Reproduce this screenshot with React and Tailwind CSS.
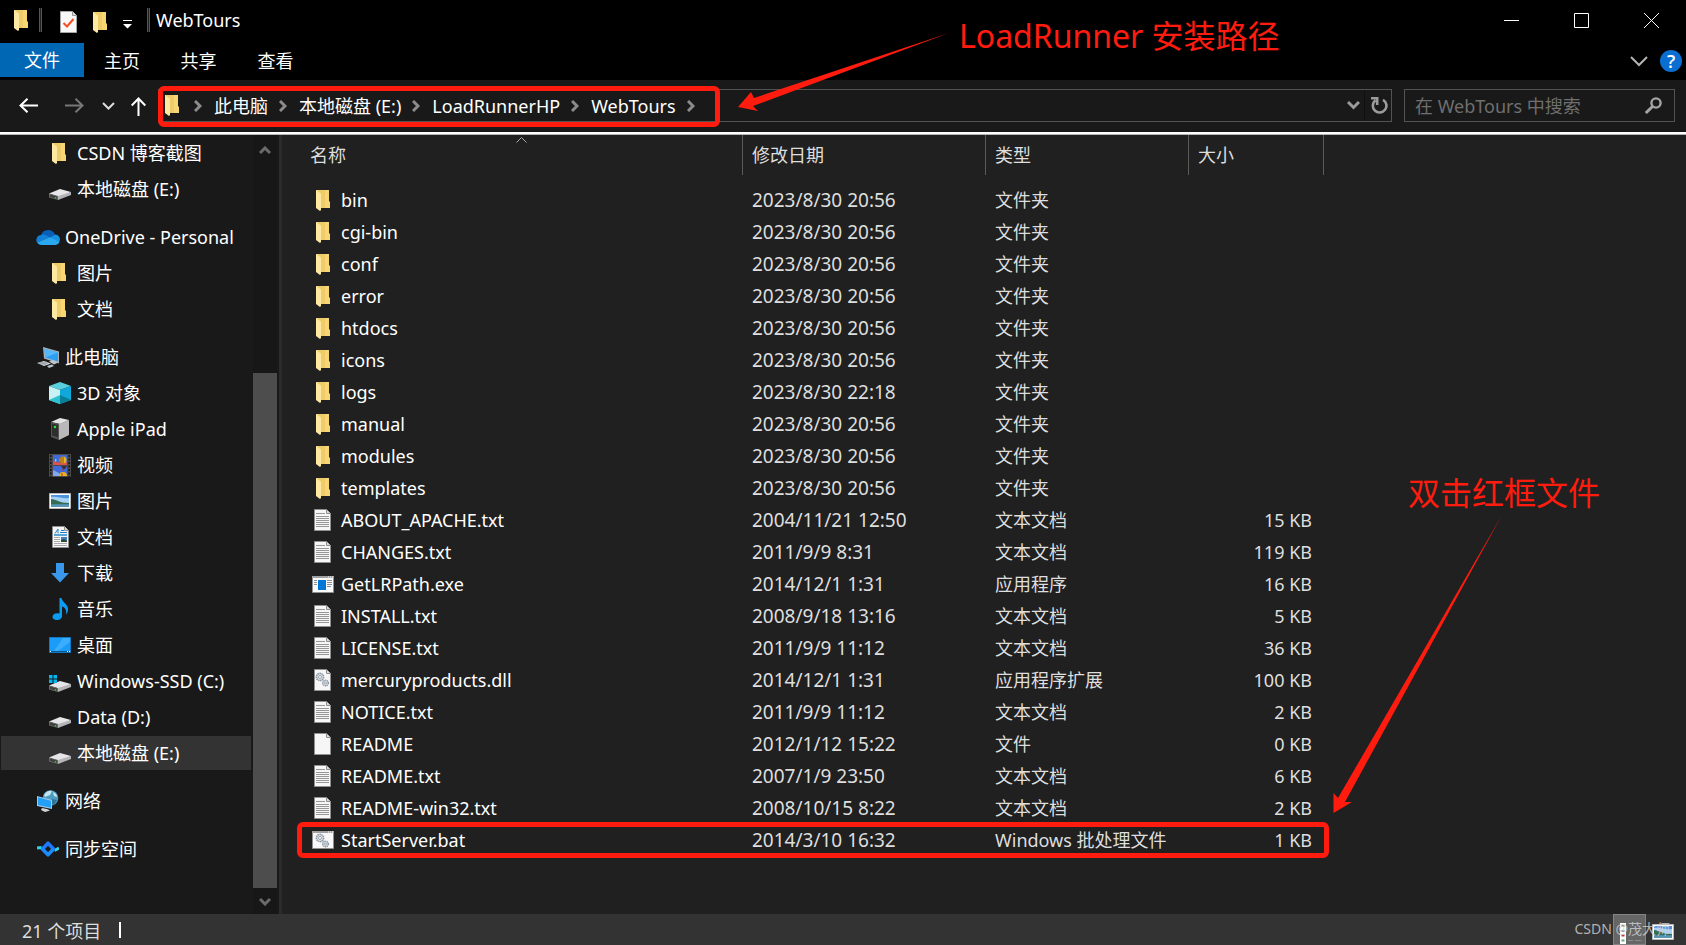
import { clsx } from 'clsx';

const FolderIcon = ({ className = '' }) => (
  <svg viewBox="0 0 14 21" className={clsx('h-[21px] w-[14px] shrink-0', className)} aria-hidden="true">
    <path d="M0 0h13v11l1 1v6H0z" fill="#f8d673" />
    <path d="M5 3 0 0h9v18H5z" fill="#efcb6a" />
    <path d="M0 0l5 4v17l-1-1v1L0 18z" fill="#ffe9a2" />
  </svg>
);

const Page = ({ children }) => (
  <svg viewBox="0 0 17 22" className="h-[22px] w-[17px] shrink-0" aria-hidden="true">
    <path d="M.5.5h12l4 4v17H.5z" fill="#f6f6f6" stroke="#8f8f8f" />
    <path d="M12.500.5v4h4" fill="#d9d9d9" stroke="#8f8f8f" />
    {children}
  </svg>
);

const Gears = ({ x = 0, y = 0 }) => (
  <g transform={`translate(${x} ${y})`} fill="#dfe4e8">
    <circle cx="6" cy="8" r="3.600" stroke="#8793a0" strokeWidth="1.600" strokeDasharray="1.400 .6" />
    <circle cx="6" cy="8" r="1.500" stroke="#8793a0" strokeWidth=".8" fill="#fff" />
    <circle cx="11.500" cy="14" r="2.800" stroke="#8793a0" strokeWidth="1.400" strokeDasharray="1.200 .6" />
    <circle cx="11.500" cy="14" r="1" stroke="#8793a0" strokeWidth=".8" fill="#fff" />
  </g>
);

const TextIcon = () => (
  <Page>
    <path d="M2 4.500h9M2 7.500h13M2 9.500h13M2 11.500h13M2 13.500h13M2 15.500h13M2 17.500h13" stroke="#8c8c8c" strokeWidth=".9" />
  </Page>
);

const DllIcon = () => (
  <Page>
    <Gears />
  </Page>
);

const ExeIcon = () => (
  <svg viewBox="0 0 22 17" className="h-[17px] w-[22px] shrink-0" aria-hidden="true">
    <path d="M.5.5h21v16H.5z" fill="#fafafa" stroke="#8f8f8f" />
    <path d="M0 0h22v2H0z" fill="#a0a0a0" />
    <path d="M6 4h8v10H6z" fill="#0078d7" />
    <path d="M2 4.500h3M2 6.500h3M2 8.500h3M15 4.500h5M15 6.500h5M15 8.500h5M15 10.500h4" stroke="#8f8f8f" />
    <path d="M16 1h1M18 1h1M20 1h1" stroke="#fff" />
  </svg>
);

const BatIcon = () => (
  <svg viewBox="0 0 22 18" className="h-[18px] w-[22px] shrink-0" aria-hidden="true">
    <path d="M.5.5h21v17H.5z" fill="#f8f8f8" stroke="#8f8f8f" />
    <path d="M0 0h22v2H0z" fill="#a0a0a0" />
    <path d="M16 1h1M18 1h1M20 1h1" stroke="#fff" />
    <Gears x={2} y={-1} />
  </svg>
);

const DriveIcon = ({ windows }) => (
  <svg viewBox="0 0 22 18" className="h-[18px] w-[22px] shrink-0 translate-y-0.5" aria-hidden="true">
    <path d="M0 11.500 11 7l11 3-11 5z" fill="#e6e6ea" />
    <path d="M0 11.500v4l9 2.500v-4z" fill="#6c6c6c" />
    <path d="M1 12.500v2.600l7 1.900v-2.600z" fill="#3d423d" />
    <path d="M9 14v4l13-5v-3z" fill="#b5b5b8" />
    <path d="M6.500 15v1.500" stroke="#1fd12b" strokeWidth="1.300" />
    {windows && <path d="M0 1h3.500v3.500H0zM4.500 1H8v3.500H4.500zM0 5.500h3.500V9H0zM4.500 5.500H8V9H4.500z" fill="#00b7f1" />}
  </svg>
);

const OneDriveIcon = () => (
  <svg viewBox="0 0 24 16" className="h-4 w-6 shrink-0" aria-hidden="true">
    <path d="M5 6a7.500 7.500 0 0 1 14-.5L14 9z" fill="#0a5fb8" />
    <path d="M5 6a5 5 0 0 0-4 7.500L14 8.500 9.500 6A7 7 0 0 0 5 6z" fill="#1180d8" />
    <path d="M14 8.500 19 5.500a5 5 0 0 1 4.500 7L21 14z" fill="#1592e2" />
    <path d="M1 13.500A5 5 0 0 0 5 16h14.500a4.500 4.500 0 0 0 4-3L14 8.200z" fill="#29a8ef" />
  </svg>
);

const ComputerIcon = () => (
  <svg viewBox="0 0 24 21" className="h-[21px] w-6 shrink-0" aria-hidden="true">
    <path d="M7 0l16 4.500v12L8 11.500z" fill="#a7b1ba" />
    <path d="M8.500 1.800 22 5.600v9L9.300 10.400z" fill="#2d9ff2" />
    <path d="M8.500 1.800 22 5.600 9.300 10.400z" fill="#55b8fa" />
    <path d="M1 16l7-2 7 2.500-7 2.500z" fill="#d6dade" />
    <path d="M3 16.500l8-1.500M5 17.500l7-1.500M4 15.300l6 2.200" stroke="#7e868d" strokeWidth=".6" />
    <path d="M13 14.500l4-1.500 5 2.500-4 2zM11 19l5-1.500 2 1.500-5 2z" fill="#bfc5ca" />
  </svg>
);

const CubeIcon = () => (
  <svg viewBox="0 0 22 22" className="size-[22px] shrink-0" aria-hidden="true">
    <path d="M11 0l11 4-11 4L0 4z" fill="#59cfdc" />
    <path d="M0 4l11 4v14L0 18z" fill="#c7f1f2" />
    <path d="M22 4 11 8v14l11-4z" fill="#0fa8d9" />
    <path d="M0 18l11-5v9z" fill="#2bc3d2" />
    <path d="M22 18l-11-5v9z" fill="#087f97" />
  </svg>
);

const DeviceIcon = () => (
  <svg viewBox="0 0 18 22" className="mx-0.5 h-[22px] w-[18px] shrink-0" aria-hidden="true">
    <path d="M0 4l9-4 9 2-9 4z" fill="#e4e4e4" />
    <path d="M0 4l8 2v16l-8-3z" fill="#555" />
    <path d="M1 5.500l6 1.500v12.500l-6-2z" fill="#2e2e2e" />
    <path d="M8 6l10-4v15L8 22z" fill="#b9b9b9" />
    <circle cx="4" cy="9" r="1.300" fill="#25e335" />
  </svg>
);

const VideoIcon = () => (
  <svg viewBox="0 0 22 23" className="h-[23px] w-[22px] shrink-0" aria-hidden="true">
    <path d="M0 0h22v23H0z" fill="#4b4b4b" />
    <path d="M4 1h14v10H4zM4 12h14v10H4z" fill="#4169d8" />
    <path d="M1.800 1v22M20.200 1v22" stroke="#181818" strokeWidth="1.600" strokeDasharray="2 1.500" />
    <path d="M4 7l4 1 4 1 6-1v3H4z" fill="#d8524f" />
    <circle cx="14" cy="6" r="3.500" fill="#edb21b" />
    <path d="M14 2.500v7M12 3v6" stroke="#84501a" />
    <path d="M6 5l2 1-2 2z" fill="#7be3ee" />
    <path d="M12 12h6l-2 3h-2z" fill="#442d31" />
    <path d="M4 16l6 3 1 3H4z" fill="#80a9f0" />
    <path d="M10 22a4 4 0 0 1 8 0z" fill="#edb21b" />
    <path d="M14 15v2M13 19v3" stroke="#b03630" />
  </svg>
);

const PictureIcon = () => (
  <svg viewBox="0 0 22 16" className="h-4 w-[22px] shrink-0" aria-hidden="true">
    <path d="M.5.5h21v15H.5z" fill="#fff" stroke="#b9b9b9" />
    <path d="M2 2h18v12H2z" fill="#4b94dd" />
    <path d="M2 4c6-1 12 2 18 1v5H2z" fill="#a8d2f4" />
    <path d="M2 6c5 0 8 4 18 4v1.500H2z" fill="#366d52" />
    <path d="M2 11.500h18V14H2z" fill="#5a95b4" />
  </svg>
);

const DocumentIcon = () => (
  <span className="flex w-[22px] shrink-0 justify-center">
    <Page>
      <path d="M3 7.500 6 3v4.500M9 4.500h3M8 6.500h7" stroke="#1b83cc" fill="none" />
      <path d="M2 9h13" stroke="#1b83cc" strokeWidth="1.400" />
      <path d="M2 11.500h6M2 13.500h6M2 15.500h6M2 17.500h13M2 19.500h13" stroke="#aaa" />
      <path d="M9 11h6v5H9z" fill="#3f7fc0" />
      <path d="M9 14l3-1 3 2v1H9z" fill="#2b4a3a" />
    </Page>
  </span>
);

const DownloadIcon = () => (
  <svg viewBox="0 0 22 20" className="h-5 w-[22px] shrink-0" aria-hidden="true">
    <path d="M7 0h8v10h5l-9 9.500L2 10h5z" fill="#3a98ec" />
  </svg>
);

const MusicIcon = () => (
  <svg viewBox="0 0 22 22" className="size-[22px] shrink-0" aria-hidden="true">
    <path d="M10.500 0h2c.5 4 6.500 6 6.500 11 0 3-1 4.500-2 5.500.8-4-.5-7-4-8V18c0 2.500-2.500 4-5 4s-4.500-1-4.500-3c0-2.500 3-4.500 7-3.500z" fill="#0b9bf3" />
  </svg>
);

const DesktopIcon = () => (
  <svg viewBox="0 0 22 16" className="h-4 w-[22px] shrink-0" aria-hidden="true">
    <path d="M.5.5h21v15H.5z" fill="#1a9cf8" stroke="#1479c2" />
    <path d="M14 1h7v4L9 14H5z" fill="#3badfc" />
    <path d="M1 14.500h20" stroke="#0b568f" />
    <path d="M1 14.500h1M18 14.500h1M20 14.500h1" stroke="#fff" />
  </svg>
);

const NetworkIcon = () => (
  <svg viewBox="0 0 22 22" className="mx-px size-[22px] shrink-0" aria-hidden="true">
    <circle cx="13.500" cy="8" r="7.800" fill="#4d9cc0" />
    <path d="M7 5c2-4 6-5 8-4l-2 4-5 2zM16 2c3 1 4 3 4 5l-3-1z" fill="#c3e5ef" />
    <path d="M15 9l5 1-3 5-3-1z" fill="#2c7298" />
    <path d="M0 6l15 4v9L0 16z" fill="#9fcdf0" />
    <path d="M1 7.200 14 10.800v7L1 15z" fill="#23a0f5" />
    <path d="M5 18l5 1 3 1.500-5 1.500-4-2z" fill="#d1d5d8" />
  </svg>
);

const SyncIcon = () => (
  <svg viewBox="0 0 22 18" className="mx-px h-[18px] w-[22px] shrink-0" aria-hidden="true" fill="none" strokeWidth="3.600">
    <path d="M17.500 10.500 22 8M4.500 7.500 0 8" stroke="#2fd3e3" strokeWidth="3" />
    <path d="M5.500 9 11 3.200 17.500 10" stroke="#1d78fb" strokeLinejoin="round" />
    <path d="M16.500 9 11 14.800 4.500 8" stroke="#1c8cfd" strokeLinejoin="round" />
  </svg>
);

const Chevron = ({ d = 'M1 1l6 6 6-6', w = 14, h = 9, stroke = 2, className }) => (
  <svg width={w} height={h} viewBox={`0 0 ${w} ${h}`} className={clsx('shrink-0', className)} fill="none" stroke="currentColor" strokeWidth={stroke} aria-hidden="true">
    <path d={d} />
  </svg>
);

const groups = [
  [
    { name: 'CSDN 博客截图', icon: 'folder' },
    { name: '本地磁盘 (E:)', icon: 'drive' },
  ],
  [
    { name: 'OneDrive - Personal', icon: 'onedrive', root: true },
    { name: '图片', icon: 'folder' },
    { name: '文档', icon: 'folder' },
  ],
  [
    { name: '此电脑', icon: 'computer', root: true },
    { name: '3D 对象', icon: 'cube' },
    { name: 'Apple iPad', icon: 'device' },
    { name: '视频', icon: 'video' },
    { name: '图片', icon: 'picture' },
    { name: '文档', icon: 'document' },
    { name: '下载', icon: 'download' },
    { name: '音乐', icon: 'music' },
    { name: '桌面', icon: 'desktop' },
    { name: 'Windows-SSD (C:)', icon: 'system' },
    { name: 'Data (D:)', icon: 'drive' },
    { name: '本地磁盘 (E:)', icon: 'drive', active: true },
  ],
  [{ name: '网络', icon: 'network', root: true }],
  [{ name: '同步空间', icon: 'sync', root: true }],
];

const sideIcons = {
  folder: <FolderIcon className="mr-[5px] ml-[3px]" />,
  drive: <DriveIcon />,
  system: <DriveIcon windows />,
  onedrive: <OneDriveIcon />,
  computer: <ComputerIcon />,
  cube: <CubeIcon />,
  device: <DeviceIcon />,
  video: <VideoIcon />,
  picture: <PictureIcon />,
  document: <DocumentIcon />,
  download: <DownloadIcon />,
  music: <MusicIcon />,
  desktop: <DesktopIcon />,
  network: <NetworkIcon />,
  sync: <SyncIcon />,
};

const fileIcons = {
  文件夹: <FolderIcon />,
  文本文档: <TextIcon />,
  应用程序: <ExeIcon />,
  应用程序扩展: <DllIcon />,
  文件: <Page />,
  'Windows 批处理文件': <BatIcon />,
};

const files = [
  ['bin', '2023/8/30 20:56', '文件夹', ''],
  ['cgi-bin', '2023/8/30 20:56', '文件夹', ''],
  ['conf', '2023/8/30 20:56', '文件夹', ''],
  ['error', '2023/8/30 20:56', '文件夹', ''],
  ['htdocs', '2023/8/30 20:56', '文件夹', ''],
  ['icons', '2023/8/30 20:56', '文件夹', ''],
  ['logs', '2023/8/30 22:18', '文件夹', ''],
  ['manual', '2023/8/30 20:56', '文件夹', ''],
  ['modules', '2023/8/30 20:56', '文件夹', ''],
  ['templates', '2023/8/30 20:56', '文件夹', ''],
  ['ABOUT_APACHE.txt', '2004/11/21 12:50', '文本文档', '15 KB'],
  ['CHANGES.txt', '2011/9/9 8:31', '文本文档', '119 KB'],
  ['GetLRPath.exe', '2014/12/1 1:31', '应用程序', '16 KB'],
  ['INSTALL.txt', '2008/9/18 13:16', '文本文档', '5 KB'],
  ['LICENSE.txt', '2011/9/9 11:12', '文本文档', '36 KB'],
  ['mercuryproducts.dll', '2014/12/1 1:31', '应用程序扩展', '100 KB'],
  ['NOTICE.txt', '2011/9/9 11:12', '文本文档', '2 KB'],
  ['README', '2012/1/12 15:22', '文件', '0 KB'],
  ['README.txt', '2007/1/9 23:50', '文本文档', '6 KB'],
  ['README-win32.txt', '2008/10/15 8:22', '文本文档', '2 KB'],
  ['StartServer.bat', '2014/3/10 16:32', 'Windows 批处理文件', '1 KB'],
];

const crumbs = ['此电脑', '本地磁盘 (E:)', 'LoadRunnerHP', 'WebTours'];

function TitleBar() {
  return (
    <header className="flex h-[43px] items-start justify-between bg-black">
      <div className="flex h-10 items-center pl-3.5">
        <FolderIcon />
        <span className="ml-[11px] h-6 w-[3px] border-x border-[#555] bg-[#222]" />
        <button aria-label="属性" className="ml-[18px] mt-1">
          <svg viewBox="0 0 17 22" className="h-[22px] w-[17px]" aria-hidden="true">
            <path d="M.5.5h12l4 4v17H.5z" fill="#f8f8f8" stroke="#a5a5a5" />
            <path d="M12.500.5v4h4" fill="#ddd" stroke="#999" />
            <path d="M3.500 12l3.500 3.500L13.500 8" fill="none" stroke="#f25022" strokeWidth="2" />
          </svg>
        </button>
        <button aria-label="新建文件夹" className="ml-4 mt-1">
          <FolderIcon />
        </button>
        <button aria-label="自定义快速访问工具栏" className="ml-4 mt-2">
          <svg viewBox="0 0 9 9" className="size-[9px]" aria-hidden="true">
            <path d="M0 0h9v1H0zM0 4h9L4.500 8.500z" fill="#fff" />
          </svg>
        </button>
        <span className="ml-[15px] h-6 w-[3px] border-x border-[#555] bg-[#222]" />
        <h1 className="ml-1.5 text-lg">WebTours</h1>
      </div>
      <div className="flex h-[41px] items-center">
        <button aria-label="最小化" className="flex w-[70px] justify-center">
          <svg viewBox="0 0 15 15" className="size-[15px]" stroke="#fff" aria-hidden="true"><path d="M0 7.500h15" /></svg>
        </button>
        <button aria-label="最大化" className="flex w-[70px] justify-center">
          <svg viewBox="0 0 15 15" className="size-[15px]" fill="none" stroke="#fff" aria-hidden="true"><path d="M.5.5h14v14H.5z" /></svg>
        </button>
        <button aria-label="关闭" className="flex w-[70px] justify-center">
          <svg viewBox="0 0 15 15" className="size-[15px]" stroke="#fff" aria-hidden="true"><path d="M0 0l15 15M15 0 0 15" /></svg>
        </button>
      </div>
    </header>
  );
}

function Ribbon() {
  return (
    <div className="flex h-[37px] items-start bg-black text-lg leading-9">
      <button className="w-[84px] bg-[#0067b5] text-center leading-[34px]">文件</button>
      <button className="w-[76px] text-center">主页</button>
      <button className="w-[77px] text-center">共享</button>
      <button className="w-[77px] text-center">查看</button>
      <div className="ml-auto flex h-9 items-center gap-3 pr-1 text-[#b4b4b4]">
        <button aria-label="展开功能区">
          <Chevron d="M1 1l8 8 8-8" w={18} h={11} />
        </button>
        <button aria-label="帮助" className="flex size-[22px] items-center justify-center rounded-full bg-[#0a6fd1] font-['Open_Sans',sans-serif] text-lg leading-none font-semibold text-white">
          ?
        </button>
      </div>
    </div>
  );
}

function AddressBar() {
  return (
    <div className="flex h-[52px] items-center bg-[#191919] pr-[11px] pb-px pl-[19px] text-lg">
      <button aria-label="后退">
        <svg viewBox="0 0 19 15" className="h-[15px] w-[19px]" fill="none" stroke="#fff" strokeWidth="2" aria-hidden="true"><path d="M19 7.500H1.500M8.500.7 1.500 7.500l7 6.800" /></svg>
      </button>
      <button aria-label="前进" className="ml-[27px]">
        <svg viewBox="0 0 19 15" className="h-[15px] w-[19px]" fill="none" stroke="#777" strokeWidth="2" aria-hidden="true"><path d="M0 7.500h17.500M10.500.7l7 6.800-7 6.800" /></svg>
      </button>
      <button aria-label="最近浏览的位置" className="ml-[18px] text-[#ddd]">
        <Chevron d="M1 1l5.500 5.500L12 1" w={13} h={8} />
      </button>
      <button aria-label="上移" className="ml-4">
        <svg viewBox="0 0 15 19" className="mt-0.5 h-[19px] w-[15px]" fill="none" stroke="#fff" strokeWidth="2" aria-hidden="true"><path d="M7.500 19V1.500M.7 8.500l6.800-7 6.800 7" /></svg>
      </button>
      <div className="relative ml-3 flex h-[33px] flex-1 items-center border border-[#535353]">
        <nav className="flex items-center pl-1.5" aria-label="地址">
          <FolderIcon />
          <Chevron d="M1 1l5 5-5 5" w={8} h={12} stroke={3} className="mr-3 ml-[15px] text-[#8c8c8c]" />
          {crumbs.map((crumb) => (
            <span key={crumb} className="flex items-center">
              <a href="#">{crumb}</a>
              <Chevron d="M1 1l5 5-5 5" w={8} h={12} stroke={3} className="mr-3 ml-[11px] text-[#8c8c8c]" />
            </span>
          ))}
        </nav>
        <span className="absolute -top-1 -left-px h-[41px] w-[562px] rounded-md border-[5px] border-[#ff1c0f]" />
        <button aria-label="历史记录" className="mr-1 ml-auto text-[#9b9b9b]">
          <Chevron d="M1 1l5.500 5.500L12 1" w={13} h={9} stroke={3} />
        </button>
        <button aria-label="刷新" className="flex h-full items-center border-l border-[#111] pr-[3px] pl-1.5">
          <svg viewBox="0 0 17 18" className="h-[18px] w-[17px]" fill="none" stroke="#9b9b9b" strokeWidth="2.600" aria-hidden="true">
            <path d="M12 2.800a6.800 6.800 0 1 1-7.500.5M0 1.300h6.200V8" />
          </svg>
        </button>
      </div>
      <label className="ml-3 flex h-[33px] w-[271px] items-center border border-[#535353] pr-3 pl-2.5">
        <input type="search" placeholder="在 WebTours 中搜索" aria-label="在 WebTours 中搜索" className="min-w-0 flex-1 bg-transparent outline-none placeholder:text-[#6f6f6f]" />
        <svg viewBox="0 0 17 17" className="size-[17px]" fill="none" stroke="#a5a5a5" aria-hidden="true">
          <circle cx="11" cy="6" r="4.600" strokeWidth="2.400" />
          <path d="M7.500 9.500.8 16" strokeWidth="3" />
        </svg>
      </label>
    </div>
  );
}

function Sidebar() {
  return (
    <aside className="flex w-[282px] shrink-0 border-r-[3px] border-[#2b2b2b] bg-[#191919]">
      <nav className="flex min-w-0 flex-1 flex-col gap-3" aria-label="导航窗格">
        {groups.map((items, i) => (
          <ul key={i}>
            {items.map((item) => (
              <li key={item.name} className="flex h-9 items-center pr-0.5 pl-px">
                <a
                  href="#"
                  className={clsx(
                    'flex h-[34px] w-full items-center text-lg whitespace-nowrap',
                    item.root ? 'gap-[5px] pl-[35px]' : 'gap-1.5 pl-12',
                    item.active && 'bg-[#333]',
                  )}
                >
                  {sideIcons[item.icon]}
                  {item.name}
                </a>
              </li>
            ))}
          </ul>
        ))}
      </nav>
      <div className="mr-0.5 flex w-6 flex-col items-center bg-[#171717] text-[#6b6b6b]">
        <button aria-label="向上滚动" className="flex h-[30px] items-center">
          <Chevron d="M1 7l5-5 5 5" w={12} h={9} stroke={3} />
        </button>
        <div className="w-full flex-[208]" />
        <div className="w-full flex-[515] bg-[#4d4d4d]" />
        <button aria-label="向下滚动" className="flex h-[26px] items-center">
          <Chevron d="M1 2l5 5 5-5" w={12} h={9} stroke={3} />
        </button>
      </div>
    </aside>
  );
}

function FileList() {
  return (
    <main className="min-w-0 flex-1 bg-[#202020]">
      <table className="w-[1042px] table-fixed border-separate border-spacing-0 text-left text-lg text-[#dedede]">
        <colgroup>
          <col className="w-[461px]" />
          <col className="w-[243px]" />
          <col className="w-[203px]" />
          <col className="w-[135px]" />
        </colgroup>
        <thead>
          <tr className="h-10">
            <th className="relative border-r border-[#5a5a5a] pl-7 font-normal">
              名称
              <Chevron d="M.5 5.500l5-5 5 5" w={11} h={6} stroke={1} className="absolute top-0.5 left-1/2 ml-1 text-[#aaa]" />
            </th>
            <th className="border-r border-[#5a5a5a] pl-[9px] font-normal">修改日期</th>
            <th className="border-r border-[#5a5a5a] pl-[9px] font-normal">类型</th>
            <th className="border-r border-[#5a5a5a] pl-[9px] font-normal">大小</th>
          </tr>
        </thead>
        <tbody>
          <tr className="h-[9px]" aria-hidden="true" />
          {files.map(([name, date, type, size]) => (
            <tr key={name} className="h-8">
              <td className="relative p-0 pl-[30px]">
                <span className="flex h-8 items-center gap-2 text-white">
                  <span className="flex w-[21px] justify-center">{fileIcons[type]}</span>
                  {name}
                </span>
                {name === 'StartServer.bat' && (
                  <span className="absolute -top-0.5 left-[15px] h-9 w-[1032px] rounded-md border-[5px] border-[#ff1c0f]" />
                )}
              </td>
              <td className="p-0 pl-[9px] text-[19px] leading-7">{date}</td>
              <td className="p-0 pl-[9px]">{type}</td>
              <td className="p-0 pr-3 text-right">{size}</td>
            </tr>
          ))}
        </tbody>
      </table>
    </main>
  );
}

function StatusBar() {
  return (
    <footer className="relative flex h-[31px] items-center bg-[#333] pl-[22px] text-lg text-[#dedede]">
      <span className="pt-0.5">21 个项目</span>
      <span className="ml-[18px] h-4 w-0.5 bg-white" />
      <div className="ml-auto flex h-full items-center gap-1.5 pr-3">
        <button aria-label="详细信息" className="flex h-full w-[33px] items-end border border-[#838383] bg-[#666] pl-1.5">
          <svg viewBox="0 0 22 21" className="h-[21px] w-[22px]" aria-hidden="true">
            <path d="M0 0h6v21H0z" fill="#fff" />
            <path d="M1.500 2h3v2h-3zM1.500 7h3v2h-3z" fill="#888" />
            <path d="M1.500 11.500h3v2h-3z" fill="#c33" />
            <path d="M1.500 16.500h3v2h-3z" fill="#6a7" />
            <path d="M8 17.500h5M15 17.500h6" stroke="#8a8a8a" />
          </svg>
        </button>
        <button aria-label="大缩略图" className="pt-1"><PictureIcon /></button>
      </div>
      <span className="absolute right-4 bottom-1.5 text-sm leading-5 text-[#d4d4d4]/80">CSDN @茂大师</span>
    </footer>
  );
}

// red notes drawn over the window
function Annotations() {
  return (
    <div className="pointer-events-none absolute inset-0 text-[32px] leading-10 text-[#ff1c0f]">
      <svg className="absolute top-0 left-0 size-full" fill="#ff1c0f" aria-hidden="true">
        <path d="M949 33 754 98l-3-6-13 15 20 4-5-5z" />
        <path d="M1502 515 1338 798l-4.500-5v20l18.500-11h-7z" />
      </svg>
      <p className="absolute top-4 left-[959px] whitespace-nowrap">LoadRunner 安装路径</p>
      <p className="absolute top-[473px] left-[1408px] whitespace-nowrap">双击红框文件</p>
    </div>
  );
}

export default function App() {
  return (
    <div className="relative flex min-h-screen flex-col overflow-hidden bg-[#202020] font-['Noto_Sans','Noto_Sans_CJK_SC',sans-serif] text-white">
      <TitleBar />
      <Ribbon />
      <AddressBar />
      <div className="h-[3px] border-b border-[#b5b5b5] bg-white" />
      <div className="flex flex-1">
        <Sidebar />
        <FileList />
      </div>
      <StatusBar />
      <Annotations />
    </div>
  );
}
